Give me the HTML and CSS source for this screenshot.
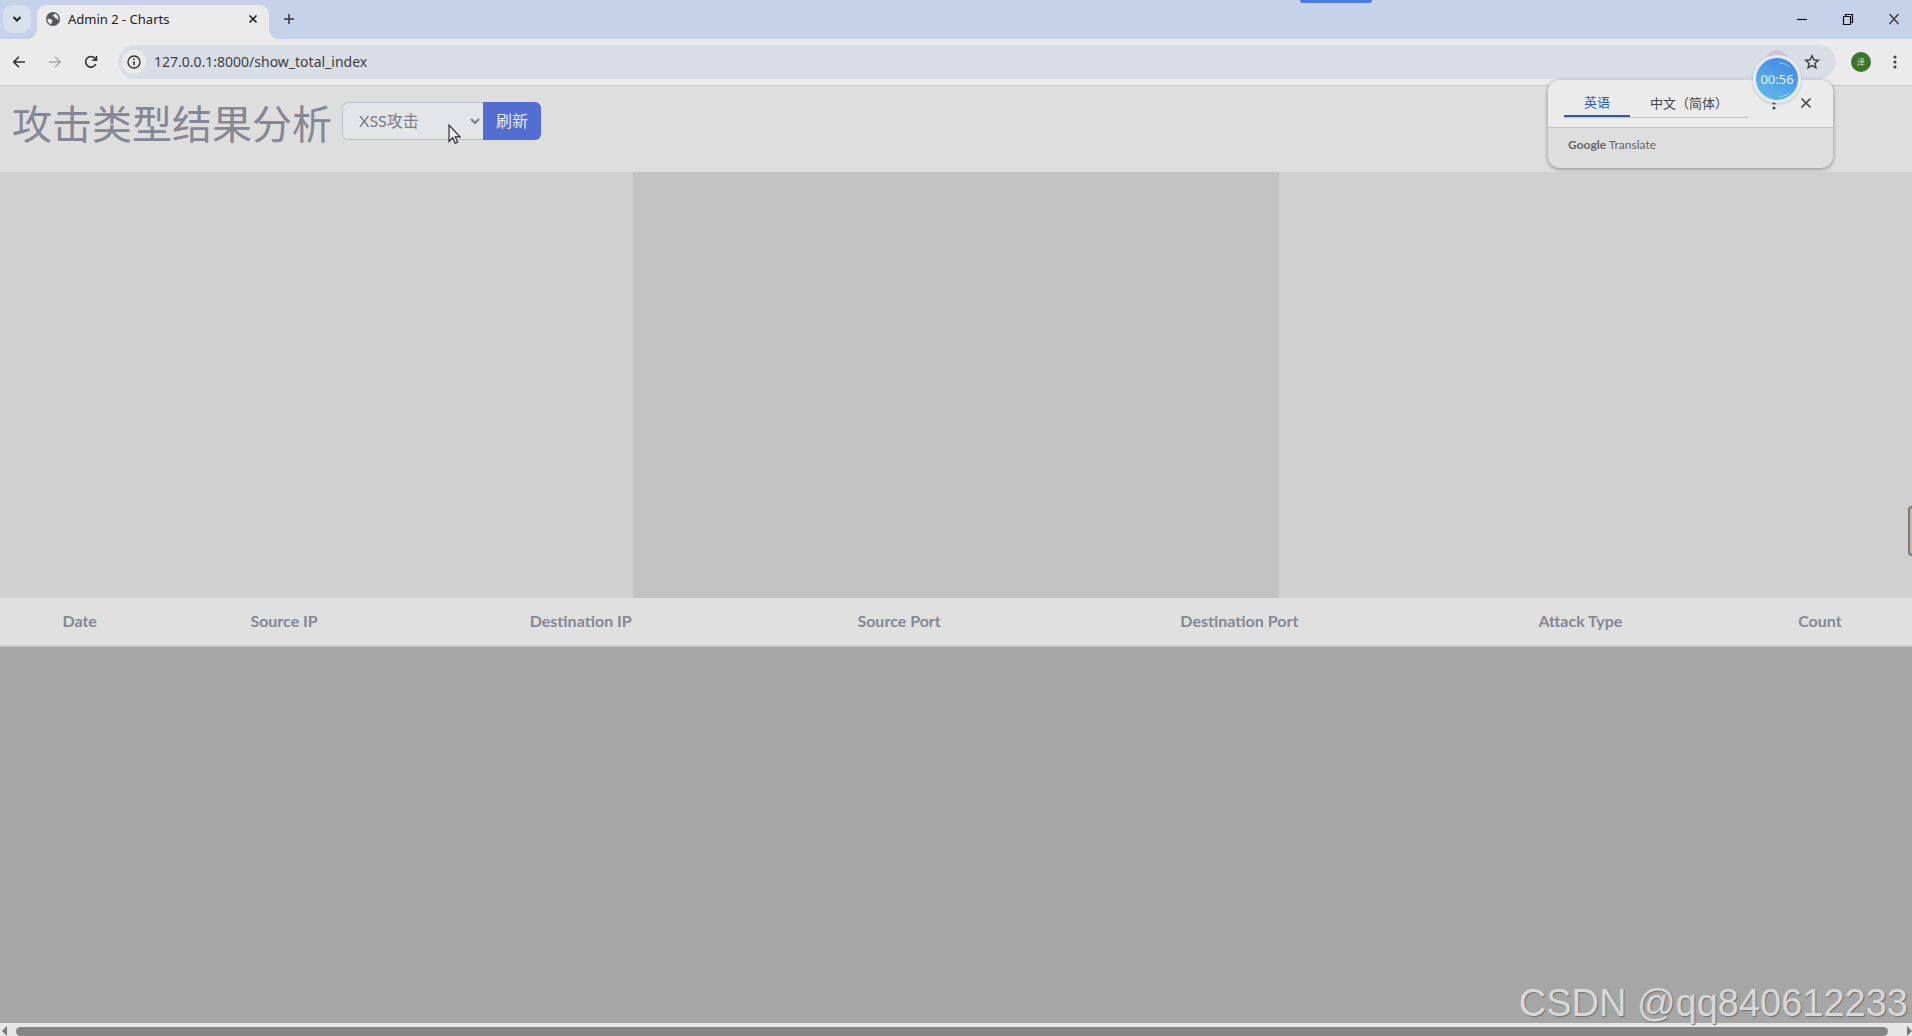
FILE: index.html
```html
<!DOCTYPE html>
<html lang="zh-CN">
<head>
  <meta charset="UTF-8">
  <title>Admin 2 - Charts</title>
  <meta name="viewport" content="width=device-width, initial-scale=1.0">
  <link rel="stylesheet" href="styles.css">
</head>
<body>

<!-- Tab strip -->
<div class="tab-strip">
  <button class="tab-search" aria-label="Search tabs">
    <svg width="10" height="8" viewBox="0 0 10 8"><path d="M1.5 2 5 5.5 8.5 2" fill="none" stroke="#222" stroke-width="2"/></svg>
  </button>
  <div class="tab">
    <svg width="14" height="14" viewBox="0 0 14 14"><circle cx="7" cy="7" r="7" fill="#56585c"/><path d="M1.5 6.5c2 .2 3.800.2 4.800 2 .3 1-.2 1.500-.8 2 .2 1-.2 1.500-.5 2C2.800 11.500 1 9.500 1.500 6.500zM8.500 1.500c-.3 1.500-1.500 1.300-1.800 2.300.2 1 1.600.6 2.200 1.500.3 1.200.8 1.400 1.800 1.300.8.2.4 1.400 1.400 1.600.9-2.700-.5-6-3.600-6.700z" fill="#ebebeb"/></svg>
    <span class="tab-title">Admin 2 - Charts</span>
    <button class="plain" aria-label="Close tab">
      <svg width="10" height="10" viewBox="0 0 10 10"><path d="m1.500 1.500 7 7m0-7-7 7" stroke="#222" stroke-width="1.600"/></svg>
    </button>
  </div>
  <button class="plain new-tab" aria-label="New tab">
    <svg width="12" height="12" viewBox="0 0 12 12"><path d="M6 1v10M1 6h10" stroke="#333" stroke-width="1.500"/></svg>
  </button>
  <div class="window-buttons">
    <button class="plain" aria-label="Minimize"><svg width="12" height="12" viewBox="0 0 12 12"><path d="M1 6.500h10" stroke="#111" stroke-width="1.200"/></svg></button>
    <button class="plain" aria-label="Restore"><svg width="12" height="12" viewBox="0 0 12 12"><path d="M1.500 3.500h7v8h-7zM3.500 3.500v-2h7v8h-2" fill="none" stroke="#111" stroke-width="1.200"/></svg></button>
    <button class="plain" aria-label="Close"><svg width="12" height="12" viewBox="0 0 12 12"><path d="m1.500 1 9 10m0-10-9 10" stroke="#333" stroke-width="1.200"/></svg></button>
  </div>
  <div class="recorder-handle"></div>
</div>

<!-- Toolbar -->
<div class="toolbar">
  <button class="plain" aria-label="Back"><svg width="14" height="14" viewBox="0 0 14 14"><path d="M13 7H2M7 1.700 1.700 7 7 12.300" fill="none" stroke="#333" stroke-width="1.600"/></svg></button>
  <button class="plain" aria-label="Forward"><svg width="14" height="14" viewBox="0 0 14 14"><path d="M1 7h11M7 1.700 12.300 7 7 12.300" fill="none" stroke="#aaa" stroke-width="1.600"/></svg></button>
  <button class="plain" aria-label="Reload"><svg width="14" height="14" viewBox="0 0 14 14"><path d="M11.800 9A5.300 5.300 0 1 1 11 3.400L12.500 5M12.500 1v4.300H8.200" fill="none" stroke="#333" stroke-width="1.600"/></svg></button>
  <div class="omnibox">
    <span class="site-info"><svg width="14" height="14" viewBox="0 0 14 14"><circle cx="7" cy="7" r="6" fill="none" stroke="#333" stroke-width="1.400"/><path d="M7 6.200v4M7 3.600v1.500" stroke="#333" stroke-width="1.500"/></svg></span>
    <input class="address" type="text" value="127.0.0.1:8000/show_total_index" aria-label="Address">
    <button class="plain" aria-label="Bookmark"><svg width="16" height="16" viewBox="0 0 16 16"><path d="m8 1.800 1.900 4 4.400.5-3.300 3 .9 4.400L8 11.500l-3.900 2.200.9-4.400-3.300-3 4.400-.5z" fill="none" stroke="#444" stroke-width="1.500"/></svg></button>
  </div>
  <span class="avatar">泽</span>
  <button class="plain" aria-label="Menu"><svg width="4" height="16" viewBox="0 0 4 16" fill="#444"><circle cx="2" cy="3" r="1.600"/><circle cx="2" cy="8" r="1.600"/><circle cx="2" cy="13" r="1.600"/></svg></button>
</div>

<!-- Page -->
<div class="page">
  <form class="page-header">
    <label class="page-title" for="attackType">攻击类型结果分析</label>
    <div class="input-group">
      <select id="attackType" class="attack-select">
        <option>XSS攻击</option>
      </select>
      <button type="button" class="refresh">刷新</button>
      <svg class="cursor" width="13" height="20" viewBox="0 0 13 20"><path d="M1 1v16.500l3.700-3.700 2.500 5.500 2.500-1.200-2.500-5.200h5z" fill="#eee" stroke="#222" stroke-width="1.100"/></svg>
    </div>
  </form>

  <div class="charts">
    <div class="chart"></div>
    <div class="chart chart-middle"></div>
    <div class="chart"></div>
  </div>

  <table class="results">
    <thead>
      <tr>
        <th>Date</th>
        <th>Source IP</th>
        <th>Destination IP</th>
        <th>Source Port</th>
        <th>Destination Port</th>
        <th>Attack Type</th>
        <th>Count</th>
      </tr>
    </thead>
  </table>
</div>

<!-- Horizontal scrollbar -->
<div class="scrollbar">
  <svg width="6" height="10" viewBox="0 0 6 10"><path d="M5 0v10L0 5z" fill="#777"/></svg>
  <div class="thumb"></div>
  <svg width="6" height="10" viewBox="0 0 6 10"><path d="M1 0v10l5-5z" fill="#777"/></svg>
</div>

<!-- Translate popup -->
<div class="translate">
  <div class="translate-top">
    <div class="languages">
      <button class="language active">英语</button>
      <button class="language">中文（简体）</button>
    </div>
    <button class="plain" aria-label="Options"><svg width="4" height="14" viewBox="0 0 4 14" fill="#444"><circle cx="2" cy="2" r="1.600"/><circle cx="2" cy="7" r="1.600"/><circle cx="2" cy="12" r="1.600"/></svg></button>
    <button class="plain" aria-label="Close translate"><svg width="12" height="12" viewBox="0 0 12 12"><path d="m1.500 1.500 9 9m0-9-9 9" stroke="#444" stroke-width="1.600"/></svg></button>
  </div>
  <div class="translate-brand"><b>Google</b> Translate</div>
</div>

<div class="timer-shadow"></div>
<div class="timer">00:56
  <svg class="timer-shine" width="42" height="42" viewBox="0 0 42 42" fill="none" stroke="#9fd3fa" stroke-linecap="round"><path d="M24 5q6 0 9 4M23 39q7-1 10-4"/></svg>
</div>
<div class="side-handle"></div>
<div class="watermark">CSDN @qq840612233</div>

</body>
</html>
```
FILE: styles.css
```css
* {
  box-sizing: border-box;
}

body {
  margin: 0;
  min-height: 100vh;
  display: flex;
  flex-direction: column;
  position: relative;
  overflow: hidden;
  font-family: Lato, "Noto Sans CJK SC", sans-serif;
  font-size: 16px;
  color: #858796;
  background: #a6a6a6;
}

svg {
  display: block;
}

button, input, select {
  font: inherit;
  margin: 0;
}

.plain {
  padding: 0;
  border: none;
  background: none;
}

/* tab strip */
.tab-strip {
  position: relative;
  display: flex;
  align-items: center;
  height: 39px;
  padding: 0 0 2px 3px;
  background: #c6d2e9;
}

.tab-search {
  display: flex;
  align-items: center;
  justify-content: center;
  width: 28px;
  height: 28px;
  padding: 0;
  border: none;
  border-radius: 9px;
  background: #d8e0ec;
}

.tab {
  position: relative;
  display: flex;
  align-items: center;
  align-self: flex-end;
  gap: 8px;
  width: 232px;
  height: 34px;
  margin: 0 0 -2px 6px;
  padding: 0 11px 6px 9px;
  border-radius: 9px 9px 0 0;
  background: #ebebeb;
}

.tab::before, .tab::after {
  content: "";
  position: absolute;
  bottom: 0;
  width: 10px;
  height: 10px;
}

.tab::before {
  right: 100%;
  background: radial-gradient(circle at 0 0, #c6d2e9 10px, #ebebeb 10px);
}

.tab::after {
  left: 100%;
  background: radial-gradient(circle at 100% 0, #c6d2e9 10px, #ebebeb 10px);
}

.tab-title {
  flex: 1;
  font-family: "Noto Sans", sans-serif;
  font-size: 13px;
  line-height: 16px;
  color: #222;
}

.new-tab {
  margin-left: 14px;
}

.window-buttons {
  display: flex;
  gap: 34px;
  margin-left: auto;
  padding-right: 12px;
}

.recorder-handle {
  position: absolute;
  top: 0;
  left: 68%;
  width: 72px;
  height: 3px;
  border-radius: 0 0 12px 12px;
  background: #4c7be0;
}

/* toolbar */
.toolbar {
  display: flex;
  align-items: center;
  gap: 20px;
  height: 47px;
  padding: 0 15px 0 12px;
  background: #ebebeb;
  border-bottom: 1px solid #c8c8c8;
}

.toolbar > .plain {
  margin-right: 2px;
}

.toolbar > .plain:last-child {
  margin: 0;
}

.omnibox {
  flex: 1;
  display: flex;
  align-items: center;
  gap: 8px;
  height: 34px;
  margin: 0 -5px 0 -2px;
  padding: 0 16px 0 4px;
  border-radius: 17px;
  background: #d9dee6;
}

.site-info {
  display: flex;
  align-items: center;
  justify-content: center;
  width: 24px;
  height: 24px;
  border-radius: 50%;
  background: #ebebeb;
}

.address {
  flex: 1;
  padding: 0 0 1px;
  border: none;
  outline: none;
  background: none;
  font-family: "Noto Sans", sans-serif;
  font-size: 14px;
  color: #3c3e42;
}

.avatar {
  width: 20px;
  height: 20px;
  margin-right: 2px;
  border-radius: 50%;
  background: #39752a;
  color: #d5e4d0;
  font-size: 8px;
  line-height: 20px;
  text-align: center;
}

/* page */
.page {
  flex: 1;
}

.page-header {
  display: flex;
  align-items: flex-start;
  gap: 10px;
  height: 86px;
  padding: 16px 12px;
  background: #dedede;
}

.page-title {
  font-size: 40px;
  line-height: 44px;
}

.input-group {
  position: relative;
  display: flex;
  height: 38px;
}

.attack-select {
  width: 141px;
  padding: 0 12px 2px;
  border: 1px solid #c0c2cb;
  border-right: none;
  border-radius: 6px 0 0 6px;
  background: #e4e5e8;
  color: #7c7e89;
}

.refresh {
  width: 58px;
  padding: 0 0 2px;
  border: none;
  border-radius: 0 6px 6px 0;
  background: #536ed0;
  color: #e8eaf2;
}

.cursor {
  position: absolute;
  left: 106px;
  top: 22px;
}

.charts {
  display: grid;
  grid-template-columns: 48fr 49fr 48fr;
}

.chart {
  height: 426px;
  background: #d0d0d0;
}

.chart-middle {
  background: #c3c3c3;
}

.results {
  width: 100%;
  border-collapse: collapse;
  background: #e0e0e0;
}

.results th {
  height: 48px;
  padding: 0 12px 2px;
  border-bottom: 2px solid #c8c9cc;
  font-weight: bold;
  text-align: center;
}

/* scrollbar */
.scrollbar {
  display: flex;
  align-items: center;
  gap: 8px;
  height: 13px;
  padding: 3px 0 0 2px;
  background: #e6e6e6;
}

.thumb {
  flex: 1;
  height: 9px;
  margin-right: 10px;
  border-radius: 5px;
  background: #868686;
}

/* translate popup */
.translate {
  position: absolute;
  top: 80px;
  right: 79px;
  width: 285px;
  border-radius: 12px;
  background: #dedede;
  box-shadow: 0 1px 4px rgba(0, 0, 0, 0.4);
  overflow: hidden;
}

.translate-top {
  display: flex;
  align-items: center;
  gap: 24px;
  height: 48px;
  padding: 0 24px 2px 16px;
  background: #ebebeb;
  border-bottom: 1px solid #c4c4c4;
}

.translate-top .plain:last-child {
  margin-right: 1px;
}

.languages {
  flex: none;
  display: flex;
  width: 184px;
  border-bottom: 1px solid #c4c4c4;
}

.language {
  padding: 0 20px;
  height: 30px;
  border: none;
  background: none;
  font-size: 13px;
  color: #444;
  white-space: nowrap;
}

.language.active {
  border-bottom: 2px solid #2f56a0;
  color: #2f5cb8;
}

.translate-brand {
  height: 40px;
  padding-left: 20px;
  font-size: 12px;
  line-height: 34px;
  color: #666;
}

/* recorder bubble */
.timer, .timer-shadow {
  position: absolute;
  top: 55px;
  right: 111px;
  width: 48px;
  height: 48px;
  border-radius: 50%;
}

.timer-shadow {
  top: 50px;
  right: 124px;
  width: 22px;
  height: 22px;
  background: #cfc6d2;
}

.timer {
  border: 3px solid #e2ecf6;
  background: linear-gradient(30deg, #66bdea, #3f83e4);
  box-shadow: 0 1px 3px rgba(0, 0, 0, 0.2);
  color: #e6f1fb;
  font-family: "Noto Sans", sans-serif;
  font-size: 13px;
  line-height: 42px;
  text-align: center;
}

.timer-shine {
  position: absolute;
  left: 0;
  top: 0;
}

.side-handle {
  position: absolute;
  right: -4px;
  top: 506px;
  width: 8px;
  height: 50px;
  border: 2px solid #77777a;
  border-radius: 4px;
  background: #cdb9ab;
}

.watermark {
  position: absolute;
  right: 4px;
  bottom: 11px;
  font-family: "Liberation Sans", sans-serif;
  font-size: 38px;
  color: #d8d8d8;
  text-shadow: 1px 1px 1px #707070;
}
```
